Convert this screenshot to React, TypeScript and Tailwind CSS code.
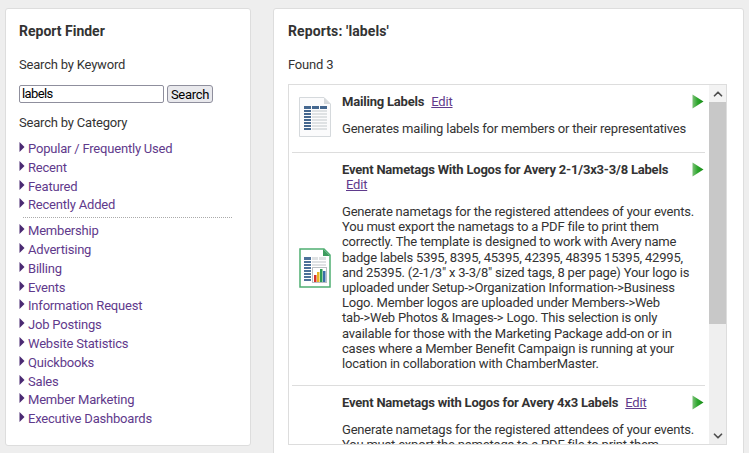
import React from 'react';
import { ChevronDown, ChevronUp } from 'lucide-react';

const topLinks = ['Popular / Frequently Used', 'Recent', 'Featured', 'Recently Added'];
const categoryLinks = [
  'Membership',
  'Advertising',
  'Billing',
  'Events',
  'Information Request',
  'Job Postings',
  'Website Statistics',
  'Quickbooks',
  'Sales',
  'Member Marketing',
  'Executive Dashboards',
];

const CategoryLink = ({ label }: { label: string }) => (
  <li className="flex h-[18.8px] items-start">
    <svg width="6" height="12" viewBox="0 0 6 12" className="mt-[1px] mr-[3px] shrink-0">
      <path d="M0.5 1 L5.5 6 L0.5 11 Z" fill="#4a2a72" />
    </svg>
    <a className="text-[13px] leading-[18px] tracking-[-0.2px] text-[#5f3a8c]">{label}</a>
  </li>
);

const PlayIcon = () => (
  <svg width="12" height="15" viewBox="0 0 12 15" className="shrink-0">
    <defs>
      <linearGradient id="play" x1="0" y1="0" x2="1" y2="0">
        <stop offset="0" stopColor="#7cc078" />
        <stop offset="0.45" stopColor="#2ea82e" />
        <stop offset="1" stopColor="#168a16" />
      </linearGradient>
    </defs>
    <path d="M0.5 0.5 L11.5 7.5 L0.5 14.5 Z" fill="url(#play)" />
  </svg>
);

const TableIcon = () => (
  <svg width="32" height="40" viewBox="0 0 32 40">
    <path d="M0.5 0.5 H25 L31.5 7 V39.5 H0.5 Z" fill="#fbfbfc" stroke="#d5d9dc" />
    <path d="M25 0.5 V7 H31.5 Z" fill="#d5d9dc" />
    <g fill="#44678f">
      <rect x="5" y="9" width="7" height="3" />
      <rect x="13" y="9" width="7" height="3" />
      <rect x="21" y="9" width="7" height="3" />
      <rect x="5" y="13" width="7" height="2" />
      <rect x="5" y="16" width="7" height="2" />
      <rect x="5" y="19" width="7" height="2" />
      <rect x="5" y="22" width="7" height="2" />
      <rect x="5" y="25" width="7" height="2" />
      <rect x="5" y="28" width="7" height="2" />
      <rect x="5" y="31" width="7" height="2" />
    </g>
    <g fill="#dfe2e4">
      <rect x="13" y="13" width="15" height="2" />
      <rect x="13" y="16" width="15" height="2" />
      <rect x="13" y="19" width="15" height="2" />
      <rect x="13" y="22" width="15" height="2" />
      <rect x="13" y="25" width="15" height="2" />
      <rect x="13" y="28" width="15" height="2" />
      <rect x="13" y="31" width="15" height="2" />
    </g>
  </svg>
);

const ChartIcon = () => (
  <svg width="32" height="40" viewBox="0 0 32 40">
    <path d="M1 1 H25 L31 7 V39 H1 Z" fill="#fff" stroke="#4fae72" strokeWidth="1.5" />
    <path d="M24 1 V8 H31 Z" fill="#3d9c5f" />
    <g fill="#4d7199">
      <rect x="5" y="9" width="7" height="3" />
      <rect x="5" y="13" width="7" height="2" />
      <rect x="5" y="16" width="7" height="2" />
      <rect x="5" y="19" width="7" height="2" />
      <rect x="5" y="22" width="7" height="2" />
      <rect x="5" y="25" width="7" height="2" />
      <rect x="5" y="28" width="7" height="2" />
      <rect x="5" y="31" width="7" height="2" />
    </g>
    <g fill="#dfe2e4">
      <rect x="13" y="9" width="6" height="3" />
      <rect x="20" y="9" width="7" height="3" />
      <rect x="13" y="13" width="14" height="2" />
      <rect x="13" y="16" width="14" height="2" />
    </g>
    <rect x="13.5" y="19.5" width="14" height="15" fill="#fff" stroke="#b9bec2" />
    <rect x="15" y="27" width="2.5" height="7" fill="#d6322c" />
    <rect x="18" y="24" width="2.5" height="10" fill="#e6b422" />
    <rect x="21" y="21" width="2.5" height="13" fill="#2f9d55" />
    <rect x="24" y="23" width="2.5" height="11" fill="#3a6ea8" />
  </svg>
);

const Report = ({
  title,
  icon,
  lines,
  iconClass,
  rowClass,
}: {
  title: string;
  icon?: React.ReactNode;
  lines: string[];
  iconClass?: string;
  rowClass?: string;
}) => (
  <div className={`mr-[4px] ml-[3px] flex border-b border-[#dddddd] ${rowClass ?? 'pb-[14px]'}`}>
    <div className={`flex w-[50px] shrink-0 pl-[7px] ${iconClass ?? ''}`}>{icon}</div>
    <div className="min-w-0 flex-1 pt-[9px]">
      <div className="flex items-start justify-between">
        <div className="w-[336px] text-[13px] leading-[15px] tracking-[-0.2px] text-[#333333]">
          <span className="font-bold">{title}</span>{' '}
          <a className="ml-[4px] text-[#5f3a8c] underline">Edit</a>
        </div>
        <div className="mr-[1px]">
          <PlayIcon />
        </div>
      </div>
      <p className="mt-[12px] text-[13px] leading-[15.2px] tracking-[-0.2px] whitespace-nowrap text-[#333333]">
        {lines.map((l) => (
          <span key={l} className="block">
            {l}
          </span>
        ))}
      </p>
    </div>
  </div>
);

export default function App() {
  return (
    <div className="flex h-[453px] w-[749px] items-start gap-[22px] overflow-hidden bg-[#eeeeee] pt-[8px] pl-[5px] font-['Roboto',sans-serif] text-[#333333]">
      <aside className="flex h-[438px] w-[246px] shrink-0 flex-col rounded-[3px] border border-[#dddddd] bg-white px-[13px] pt-[13px]">
        <h2 className="text-[14px] leading-[18px] font-bold">Report Finder</h2>
        <p className="mt-[16px] text-[13px] leading-[18px] tracking-[-0.2px]">Search by Keyword</p>
        <div className="mt-[11px] flex items-center gap-[3px]">
          <input
            readOnly
            value="labels"
            className="h-[18px] w-[145px] rounded-[2px] border border-[#8f8f9d] bg-white px-[2px] text-[13px] tracking-[-0.6px] text-black outline-none"
          />
          <button className="h-[18px] w-[46px] rounded-[3px] border border-[#8f8f9d] bg-[#e9e9ed] text-center text-[13px] leading-[15px] tracking-[-0.3px] text-black">
            Search
          </button>
        </div>
        <p className="mt-[11px] text-[13px] leading-[18px] tracking-[-0.2px]">Search by Category</p>
        <ul className="mt-[8px]">
          {topLinks.map((l) => (
            <CategoryLink key={l} label={l} />
          ))}
        </ul>
        <div className="mt-[2px] mb-[4px] ml-[4px] w-[209px] border-t border-dotted border-[#aaaaaa]" />
        <ul>
          {categoryLinks.map((l) => (
            <CategoryLink key={l} label={l} />
          ))}
        </ul>
      </aside>

      <main className="h-[460px] w-[471px] shrink-0 rounded-[3px] border border-[#dddddd] bg-white px-[14px] pt-[13px]">
        <h2 className="text-[14px] leading-[18px] font-bold tracking-[0.1px]">Reports: 'labels'</h2>
        <p className="mt-[16px] text-[13px] leading-[18px] tracking-[-0.2px]">Found 3</p>
        <div className="mt-[10px] flex h-[361px] w-[439px] overflow-hidden border border-[#dddddd]">
          <div className="min-w-0 flex-1 overflow-hidden">
            <Report
              title="Mailing Labels"
              rowClass="pb-[15px]"
              iconClass="items-start pt-[12px]"
              icon={<TableIcon />}
              lines={['Generates mailing labels for members or their representatives']}
            />
            <Report
              title="Event Nametags With Logos for Avery 2-1/3x3-3/8 Labels"
              iconClass="items-center pt-[12px]"
              icon={<ChartIcon />}
              lines={[
                'Generate nametags for the registered attendees of your events.',
                'You must export the nametags to a PDF file to print them',
                'correctly. The template is designed to work with Avery name',
                'badge labels 5395, 8395, 45395, 42395, 48395 15395, 42995,',
                'and 25395. (2-1/3" x 3-3/8" sized tags, 8 per page) Your logo is',
                'uploaded under Setup->Organization Information->Business',
                'Logo. Member logos are uploaded under Members->Web',
                'tab->Web Photos & Images-> Logo. This selection is only',
                'available for those with the Marketing Package add-on or in',
                'cases where a Member Benefit Campaign is running at your',
                'location in collaboration with ChamberMaster.',
              ]}
            />
            <Report
              title="Event Nametags with Logos for Avery 4x3 Labels"
              lines={[
                'Generate nametags for the registered attendees of your events.',
                'You must export the nametags to a PDF file to print them',
                'correctly.',
              ]}
            />
          </div>
          <div className="flex w-[17px] shrink-0 flex-col bg-[#efefef]">
            <div className="flex h-[17px] items-center justify-center bg-[#f3f3f3]">
              <ChevronUp size={14} strokeWidth={3} color="#505050" />
            </div>
            <div className="h-[222px] bg-[#c8c8c8]" />
            <div className="flex-1" />
            <div className="flex h-[17px] items-center justify-center">
              <ChevronDown size={14} strokeWidth={3} color="#505050" />
            </div>
          </div>
        </div>
      </main>
    </div>
  );
}
